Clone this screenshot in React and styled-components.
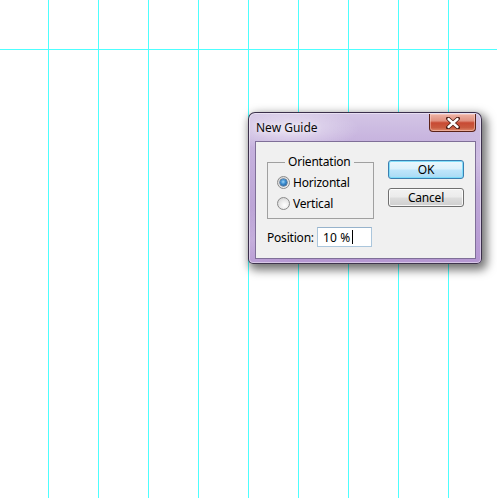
import React from "react";
import styled, { createGlobalStyle } from "styled-components";

const Global = createGlobalStyle`
  html, body { margin: 0; padding: 0; background: #ffffff; }
  body { font-family: "Noto Sans", "Open Sans", sans-serif; }
  * { box-sizing: border-box; }
`;

const Canvas = styled.div`
  position: relative;
  width: 100%;
  height: 498px;
  overflow: hidden;
  background-color: #ffffff;
  background-image:
    linear-gradient(to bottom, transparent 49px, #4dffff 49px, #4dffff 50px, transparent 50px),
    linear-gradient(to right, transparent 48px, #4dffff 48px, #4dffff 49px, transparent 49px);
  background-size: 100% 100%, 50px 100%;
  background-repeat: no-repeat, repeat-x;
`;

const Window = styled.div`
  position: absolute;
  left: 248px;
  top: 112px;
  width: 234px;
  height: 152px;
  display: flex;
  flex-direction: column;
  border: 1px solid rgba(45, 35, 60, 0.9);
  border-radius: 7px 7px 5px 5px;
  background:
    radial-gradient(ellipse 70px 22px at 40px 16px, rgba(255, 255, 255, 0.55), rgba(255, 255, 255, 0) 100%),
    linear-gradient(160deg, rgba(255,255,255,0) 40%, rgba(255,255,255,0.18) 55%, rgba(255,255,255,0) 70%),
    linear-gradient(180deg, #d3c5e5 0%, #c6b2de 20%, #bda6d7 60%, #b597d2 100%);
  box-shadow:
    inset 0 0 0 1px rgba(255, 255, 255, 0.45),
    3px 4px 10px 2px rgba(0, 0, 0, 0.55);
`;

const TitleBar = styled.div`
  position: relative;
  height: 28px;
  display: flex;
  align-items: center;
  padding-left: 7px;
  padding-top: 1px;
  font-size: 12px;
  color: #0a0a0a;
  text-shadow: 0 0 6px rgba(255, 255, 255, 0.9);
`;

const CloseButton = styled.div`
  position: absolute;
  top: 1px;
  right: 5px;
  width: 47px;
  height: 18px;
  display: flex;
  align-items: center;
  justify-content: center;
  border: 1px solid #5b2218;
  border-top: none;
  border-radius: 0 0 4px 4px;
  background: linear-gradient(180deg, #eeb3a6 0%, #e0907f 40%, #c84a33 52%, #c95a3f 80%, #e08b6e 100%);
  box-shadow: inset 0 0 0 1px rgba(255, 220, 210, 0.45);
`;

const Client = styled.div`
  flex: 1;
  margin: 0 5px 4px 6px;
  border: 1px solid #7f6f98;
  background: #f0f0f0;
  display: flex;
  padding: 12px 0 0 11px;
  gap: 14px;
  font-size: 12px;
  letter-spacing: -0.2px;
  color: #000;
`;

const LeftColumn = styled.div`
  display: flex;
  flex-direction: column;
  gap: 8px;
`;

const Group = styled.div`
  position: relative;
  margin-top: 8px;
  width: 107px;
  height: 57px;
  border: 1px solid #a0a0a0;
  padding: 9px 0 0 9px;
  display: flex;
  flex-direction: column;
`;

const Legend = styled.span`
  position: absolute;
  top: -9px;
  left: 17px;
  padding: 0 3px;
  line-height: 16px;
  background: #f0f0f0;
`;

const RadioRow = styled.label`
  height: 21px;
  display: flex;
  align-items: center;
  gap: 3px;
`;

const RadioCircle = styled.span`
  position: relative;
  width: 13px;
  height: 13px;
  border-radius: 50%;
  border: 1px solid #8a8a8a;
  background: radial-gradient(circle at 60% 65%, #ffffff 0%, #e6e6e6 55%, #c9c9c9 100%);
  display: flex;
  align-items: center;
  justify-content: center;
  &::after {
    content: "";
    display: ${(p) => (p.$checked ? "block" : "none")};
    width: 7px;
    height: 7px;
    border-radius: 50%;
    background: radial-gradient(circle at 45% 40%, #9fd4f7 0%, #3c8fd2 40%, #16457a 100%);
    box-shadow: 0 0 0 0.5px #1b3e66;
  }
`;

const PositionRow = styled.div`
  display: flex;
  align-items: center;
  gap: 3px;
`;

const TextInput = styled.div`
  width: 55px;
  height: 20px;
  border: 1px solid #abc6dc;
  border-top-color: #97b3cc;
  background: #ffffff;
  display: flex;
  align-items: center;
  padding-left: 5px;
  letter-spacing: 0.2px;
`;

const Caret = styled.span`
  display: inline-block;
  width: 1px;
  height: 14px;
  margin-left: 1px;
  background: #000;
`;

const ButtonColumn = styled.div`
  display: flex;
  flex-direction: column;
  gap: 9px;
  margin-top: 6px;
`;

const Button = styled.div`
  width: 76px;
  height: 19px;
  border-radius: 3px;
  display: flex;
  align-items: center;
  justify-content: center;
  font-size: 12px;
  color: #000;
  border: 1px solid ${(p) => (p.$default ? "#3c7fb1" : "#707070")};
  background: ${(p) =>
    p.$default
      ? "linear-gradient(180deg, #ecf7fd 0%, #dbf1fc 48%, #c0e6fb 52%, #a9daf5 100%)"
      : "linear-gradient(180deg, #f2f2f2 0%, #ebebeb 48%, #dddddd 52%, #cfcfcf 100%)"};
  box-shadow: inset 0 0 0 1px
    ${(p) => (p.$default ? "rgba(120, 220, 250, 0.9)" : "rgba(255, 255, 255, 0.8)")};
`;

function CloseGlyph() {
  return (
    <svg width="14" height="12" viewBox="0 0 14 12">
      <path
        d="M2 1.5 L12 10.5 M12 1.5 L2 10.5"
        stroke="#4a1a12"
        strokeWidth="4"
        strokeLinecap="round"
      />
      <path
        d="M2.5 2 L11.5 10 M11.5 2 L2.5 10"
        stroke="#ffffff"
        strokeWidth="2.4"
        strokeLinecap="round"
      />
    </svg>
  );
}

export default function App() {
  return (
    <>
      <Global />
      <Canvas>
        <Window>
          <TitleBar>
            New Guide
            <CloseButton>
              <CloseGlyph />
            </CloseButton>
          </TitleBar>
          <Client>
            <LeftColumn>
              <Group>
                <Legend>Orientation</Legend>
                <RadioRow>
                  <RadioCircle $checked />
                  Horizontal
                </RadioRow>
                <RadioRow>
                  <RadioCircle />
                  Vertical
                </RadioRow>
              </Group>
              <PositionRow>
                Position:
                <TextInput>
                  10 %<Caret />
                </TextInput>
              </PositionRow>
            </LeftColumn>
            <ButtonColumn>
              <Button $default>OK</Button>
              <Button>Cancel</Button>
            </ButtonColumn>
          </Client>
        </Window>
      </Canvas>
    </>
  );
}
